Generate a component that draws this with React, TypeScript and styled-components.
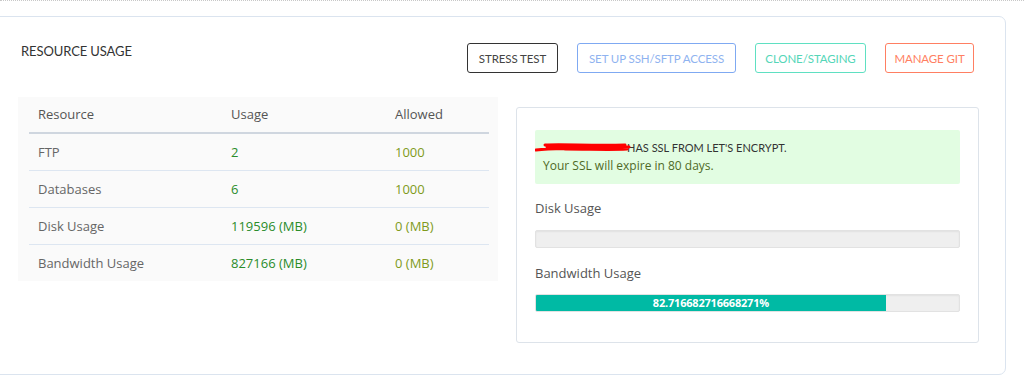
import * as React from "react";
import styled, { createGlobalStyle } from "styled-components";

const Global = createGlobalStyle`
  html, body { margin: 0; padding: 0; background: #fff; }
  body { font-family: "Open Sans", "DejaVu Sans", sans-serif; overflow: hidden; }
  * { box-sizing: border-box; }
`;

const Page = styled.div`
  width: 1024px;
  height: 378px;
  overflow: hidden;
`;

const TopRule = styled.div`
  height: 1px;
  border-top: 1px dotted #c8c8c8;
`;

const Card = styled.section`
  margin: 15px 0 0 -10px;
  width: 1016px;
  height: 359px;
  border: 1px solid #dbe4ef;
  border-radius: 7px;
  padding: 26px 26px 0 27px;
`;

const Header = styled.div`
  display: flex;
  align-items: flex-start;
  justify-content: space-between;
  padding-right: 5px;
`;

const Title = styled.h3`
  margin: 1px 0 0 3px;
  font-family: "Lato", "Liberation Sans", sans-serif;
  font-size: 13px;
  line-height: 14px;
  font-weight: 400;
  color: #333;
  letter-spacing: -0.1px;
`;

const Actions = styled.div`
  display: flex;
  gap: 19px;
`;

const ActionButton = styled.button<{ tone: string; text: string; w: number }>`
  width: ${({ w }) => w}px;
  height: 30px;
  padding: 0;
  background: #fff;
  border: 1px solid ${({ tone }) => tone};
  border-radius: 3px;
  color: ${({ text }) => text};
  font-family: "Lato", "Liberation Sans", sans-serif;
  font-size: 11.5px;
  letter-spacing: -0.1px;
  text-transform: uppercase;
  white-space: nowrap;
  cursor: pointer;
`;

const Body = styled.div`
  display: flex;
  align-items: flex-start;
  gap: 18px;
  margin-top: 24px;
`;

const TableBox = styled.div`
  flex: 0 0 480px;
  background: #fafafa;
  padding: 0 9px 0 11px;
`;

const Table = styled.table`
  width: 100%;
  border-collapse: collapse;
  font-size: 13px;
  color: #666;
`;

const Th = styled.th<{ w?: number }>`
  width: ${({ w }) => (w ? w + "px" : "auto")};
  height: 36px;
  padding: 0 9px 1px;
  text-align: left;
  font-weight: 400;
  color: #555;
  border-bottom: 2px solid #cfd6df;
`;

const Tr = styled.tr`
  & td { border-bottom: 1px solid #dde6f1; }
  &:last-child td { border-bottom: none; }
`;

const Td = styled.td<{ color?: string }>`
  height: 37px;
  padding: 0 9px;
  color: ${({ color }) => color || "#666"};
`;

const Panel = styled.div`
  flex: 0 0 463px;
  margin-top: 10px;
  border: 1px solid #dde3ea;
  border-radius: 3px;
  padding: 22px 18px 30px 18px;
`;

const Alert = styled.div`
  position: relative;
  background: #e2fde2;
  border-radius: 2px;
  padding: 9px 8px 9px 8px;
  font-size: 12px;
  line-height: 18px;
  color: #4f6a27;
`;

const AlertHead = styled.div`
  font-family: "Lato", "Liberation Sans", sans-serif;
  font-size: 11px;
  color: #333;
  padding-left: 84px;
`;

const Scribble = styled.svg`
  position: absolute;
  left: 0;
  top: 11px;
`;

const Label = styled.div<{ gap: number }>`
  margin-top: ${({ gap }) => gap}px;
  font-size: 13px;
  line-height: 18px;
  color: #555;
`;

const Bar = styled.div<{ gap: number }>`
  margin-top: ${({ gap }) => gap}px;
  height: 18px;
  background: #efefef;
  border: 1px solid #e2e2e2;
  border-radius: 2px;
  box-shadow: inset 0 1px 2px rgba(0, 0, 0, 0.06);
  overflow: hidden;
`;

const Fill = styled.div`
  height: 100%;
  background: #00baa4;
  color: #fff;
  font-size: 11px;
  font-weight: 700;
  line-height: 16px;
  text-align: center;
  letter-spacing: -0.2px;
`;

const rows = [
  { name: "FTP", used: "2", allowed: "1000" },
  { name: "Databases", used: "6", allowed: "1000" },
  { name: "Disk Usage", used: "119596 (MB)", allowed: "0 (MB)" },
  { name: "Bandwidth Usage", used: "827166 (MB)", allowed: "0 (MB)" },
];

const buttons = [
  { label: "Stress Test", tone: "#333", text: "#444", w: 91 },
  { label: "Set up SSH/SFTP Access", tone: "#7fa9f2", text: "#8fb3f0", w: 159 },
  { label: "Clone/Staging", tone: "#5fe0c2", text: "#55d6b8", w: 111 },
  { label: "Manage Git", tone: "#ff7f62", text: "#ff7f62", w: 89 },
];

const bandwidth = "82.716682716668271";

export default function App() {
  return (
    <Page>
      <Global />
      <TopRule />
      <Card>
        <Header>
          <Title>RESOURCE USAGE</Title>
          <Actions>
            {buttons.map((b) => (
              <ActionButton key={b.label} tone={b.tone} text={b.text} w={b.w}>
                {b.label}
              </ActionButton>
            ))}
          </Actions>
        </Header>
        <Body>
          <TableBox>
            <Table>
              <thead>
                <tr>
                  <Th w={193}>Resource</Th>
                  <Th w={164}>Usage</Th>
                  <Th>Allowed</Th>
                </tr>
              </thead>
              <tbody>
                {rows.map((r) => (
                  <Tr key={r.name}>
                    <Td>{r.name}</Td>
                    <Td color="#2a8c2a">{r.used}</Td>
                    <Td color="#7f9a1c">{r.allowed}</Td>
                  </Tr>
                ))}
              </tbody>
            </Table>
          </TableBox>
          <Panel>
            <Alert>
              <Scribble width="96" height="12" viewBox="0 0 96 12">
                <path d="M1 9 C20 7 40 8 60 6 M10 4 C30 3 55 5 90 4 M12 6 C40 5 70 7 94 6 M30 8 C55 8 75 9 92 8" stroke="#ff0000" strokeWidth="3" fill="none" strokeLinecap="round" />
              </Scribble>
              <AlertHead>HAS SSL FROM LET'S ENCRYPT.</AlertHead>
              <div>Your SSL will expire in 80 days.</div>
            </Alert>
            <Label gap={15}>Disk Usage</Label>
            <Bar gap={13} />
            <Label gap={16}>Bandwidth Usage</Label>
            <Bar gap={12}>
              <Fill style={{ width: parseFloat(bandwidth) + "%" }}>{bandwidth}%</Fill>
            </Bar>
          </Panel>
        </Body>
      </Card>
    </Page>
  );
}
